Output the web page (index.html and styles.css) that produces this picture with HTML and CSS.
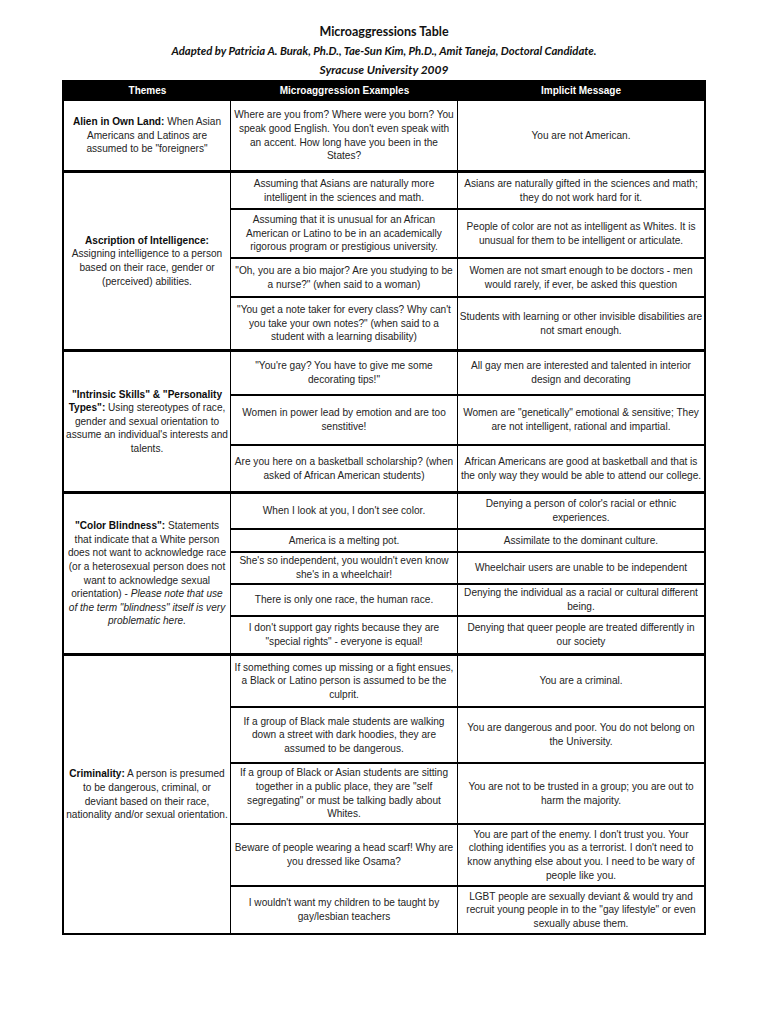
FILE: index.html
```html
<!DOCTYPE html>
<html lang="en">
<head>
<meta charset="utf-8">
<title>Microaggressions Table</title>
<link rel="stylesheet" href="styles.css">
</head>
<body>
<div class="sheet">
  <header class="doc-head">
    <h1 class="title">Microaggressions Table</h1>
    <p class="authors">Adapted by Patricia A. Burak, Ph.D., Tae-Sun Kim, Ph.D., Amit Taneja, Doctoral Candidate.</p>
    <p class="univ">Syracuse University 2009</p>
  </header>

  <div class="mtable">
    <div class="th">Themes</div>
    <div class="th">Microaggression Examples</div>
    <div class="th">Implicit Message</div>

    <div class="theme span1 gend"><p><b>Alien in Own Land:</b> When Asian<br>Americans and Latinos are<br>assumed to be "foreigners"</p></div>
    <div class="ex gend">Where are you from? Where were you born? You speak good English. You don't even speak with an accent. How long have you been in the States?</div>
    <div class="msg gend">You are not American.</div>

    <div class="theme span4 gend"><p><b>Ascription of Intelligence:</b><br>Assigning intelligence to a person<br>based on their race, gender or<br>(perceived) abilities.</p></div>
    <div class="ex">Assuming that Asians are naturally more intelligent in the sciences and math.</div>
    <div class="msg">Asians are naturally gifted in the sciences and math; they do not work hard for it.</div>
    <div class="ex">Assuming that it is unusual for an African American or Latino to be in an academically rigorous program or prestigious university.</div>
    <div class="msg">People of color are not as intelligent as Whites. It is unusual for them to be intelligent or articulate.</div>
    <div class="ex">"Oh, you are a bio major? Are you studying to be a nurse?" (when said to a woman)</div>
    <div class="msg">Women are not smart enough to be doctors - men would rarely, if ever, be asked this question</div>
    <div class="ex gend">"You get a note taker for every class? Why can't you take your own notes?" (when said to a student with a learning disability)</div>
    <div class="msg gend">Students with learning or other invisible disabilities are not smart enough.</div>

    <div class="theme span3 gend"><p><b>"Intrinsic Skills" &amp; "Personality<br>Types":</b> Using stereotypes of race,<br>gender and sexual orientation to<br>assume an individual's interests and<br>talents.</p></div>
    <div class="ex">"You're gay? You have to give me some decorating tips!"</div>
    <div class="msg">All gay men are interested and talented in interior design and decorating</div>
    <div class="ex">Women in power lead by emotion and are too senstitive!</div>
    <div class="msg">Women are "genetically" emotional &amp; sensitive; They are not intelligent, rational and impartial.</div>
    <div class="ex gend">Are you here on a basketball scholarship? (when asked of African American students)</div>
    <div class="msg gend">African Americans are good at basketball and that is the only way they would be able to attend our college.</div>

    <div class="theme span5 gend"><p><b>"Color Blindness":</b> Statements<br>that indicate that a White person<br>does not want to acknowledge race<br>(or a heterosexual person does not<br>want to acknowledge sexual<br>orientation) - <i>Please note that use<br>of the term "blindness" itself is very<br>problematic here.</i></p></div>
    <div class="ex">When I look at you, I don't see color.</div>
    <div class="msg">Denying a person of color's racial or ethnic<br>experiences.</div>
    <div class="ex">America is a melting pot.</div>
    <div class="msg">Assimilate to the dominant culture.</div>
    <div class="ex">She's so independent, you wouldn't even know she's in a wheelchair!</div>
    <div class="msg">Wheelchair users are unable to be independent</div>
    <div class="ex">There is only one race, the human race.</div>
    <div class="msg">Denying the individual as a racial or cultural different being.</div>
    <div class="ex gend">I don't support gay rights because they are "special rights" - everyone is equal!</div>
    <div class="msg gend">Denying that queer people are treated differently in<br>our society</div>

    <div class="theme span5 last"><p><b>Criminality:</b> A person is presumed<br>to be dangerous, criminal, or<br>deviant based on their race,<br>nationality and/or sexual orientation.</p></div>
    <div class="ex">If something comes up missing or a fight ensues, a Black or Latino person is assumed to be the culprit.</div>
    <div class="msg">You are a criminal.</div>
    <div class="ex">If a group of Black male students are walking down a street with dark hoodies, they are assumed to be dangerous.</div>
    <div class="msg">You are dangerous and poor. You do not belong on<br>the University.</div>
    <div class="ex">If a group of Black or Asian students are sitting together in a public place, they are "self segregating" or must be talking badly about Whites.</div>
    <div class="msg">You are not to be trusted in a group; you are out to harm the majority.</div>
    <div class="ex">Beware of people wearing a head scarf! Why are you dressed like Osama?</div>
    <div class="msg">You are part of the enemy. I don't trust you. Your clothing identifies you as a terrorist. I don't need to know anything else about you. I need to be wary of people like you.</div>
    <div class="ex last">I wouldn't want my children to be taught by gay/lesbian teachers</div>
    <div class="msg last">LGBT people are sexually deviant &amp; would try and recruit young people in to the "gay lifestyle" or even sexually abuse them.</div>
  </div>
</div>
</body>
</html>
```

FILE: styles.css
```css
* { box-sizing: border-box; }

html, body {
  margin: 0;
  padding: 0;
  background: #ffffff;
}

.sheet {
  width: 768px;
  margin: 0 auto;
}

.doc-head {
  padding-top: 23px;
  margin-bottom: 1px;
  text-align: center;
  color: #111;
  font-family: Lato, "Open Sans", "Liberation Sans", sans-serif;
}

.title {
  margin: 0;
  font-size: 12.5px;
  line-height: 18px;
  font-weight: 700;
}

.authors,
.univ {
  margin: 0;
  font-weight: 700;
  font-style: italic;
}

.authors {
  font-size: 11.3px;
  line-height: 20px;
}

.univ {
  font-size: 12px;
  line-height: 18px;
}

.mtable {
  width: 644px;
  margin: 0 auto;
  display: grid;
  grid-template-columns: 167px 227px 246px;
  grid-template-rows: 21px 72px 37px 49px 39px 54px 44px 50px 48px 36px 23px 32px 32px 39px 52px 56px 61px 62px 46px;
  border: 2px solid #000;
  border-top: 0;
  font-family: "Liberation Sans", Arial, sans-serif;
  font-size: 10.1px;
  line-height: 13.6px;
  color: #242424;
}

.th {
  background: #000;
  color: #fff;
  font-weight: 700;
  font-size: 10px;
  display: flex;
  align-items: center;
  justify-content: center;
}

.theme,
.ex,
.msg {
  display: flex;
  align-items: center;
  justify-content: center;
  text-align: center;
  padding: 0 1px;
  border-bottom: 2px solid #000;
}

.theme {
  grid-column: 1;
  padding: 0;
  border-right: 1px solid #000;
}

.ex {
  grid-column: 2;
  border-right: 1px solid #000;
}

.msg {
  grid-column: 3;
  padding: 0;
}

.theme p { margin: 0; }
.theme b { color: #0d0d0d; }

.span1 { grid-row: span 1; }
.span3 { grid-row: span 3; }
.span4 { grid-row: span 4; }
.span5 { grid-row: span 5; }

.gend { border-bottom-width: 3px; }
.last { border-bottom: 0; }
```
